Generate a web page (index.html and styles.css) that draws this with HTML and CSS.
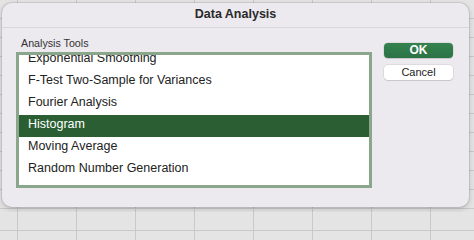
FILE: index.html
```html
<!DOCTYPE html>
<html>
<head>
<meta charset="utf-8">
<link rel="stylesheet" href="styles.css">
</head>
<body>
<div class="dialog">
  <div class="titlebar">Data Analysis</div>
  <div class="content">
    <div class="tools">
      <div class="label">Analysis Tools</div>
      <div class="listbox">
        <ul class="list">
          <li>Exponential Smoothing</li>
          <li>F-Test Two-Sample for Variances</li>
          <li>Fourier Analysis</li>
          <li class="selected">Histogram</li>
          <li>Moving Average</li>
          <li>Random Number Generation</li>
          <li>Rank and Percentile</li>
        </ul>
      </div>
    </div>
    <div class="buttons">
      <button class="btn primary">OK</button>
      <button class="btn">Cancel</button>
    </div>
  </div>
</div>
</body>
</html>
```
FILE: styles.css
```css
html {
  margin: 0;
  height: 212px;
  overflow: hidden;
}
body {
  margin: 0;
  height: 212px;
  font-family: "Liberation Sans", Arial, sans-serif;
  background-color: #e4e4e4;
  background-image:
    repeating-linear-gradient(to bottom, transparent 0, transparent 18px, #c9c9c9 18px, #c9c9c9 19px),
    repeating-linear-gradient(to right, transparent 0, transparent 17px, #c9c9c9 17px, #c9c9c9 18px, transparent 18px, transparent 59px);
  padding: 3px 5px 0 2px;
  box-sizing: border-box;
  overflow: hidden;
}
.dialog {
  width: 467px;
  height: 204px;
  background: #ece9ef;
  border-radius: 10px;
  box-shadow: 0 0 0 1px rgba(0,0,0,0.08), 0 2px 6px rgba(0,0,0,0.18);
  display: flex;
  flex-direction: column;
}
.titlebar {
  height: 24px;
  line-height: 23px;
  text-align: center;
  font-weight: bold;
  font-size: 12.5px;
  color: #2a2a2a;
  border-bottom: 1px solid #d9d6dc;
  flex: none;
}
.content {
  display: flex;
  padding: 0 0 0 14px;
}
.tools {
  width: 356px;
}
.label {
  font-size: 10.7px;
  color: #333;
  padding: 9px 0 0 5px;
  height: 15px;
  line-height: 13px;
}
.listbox {
  height: 130px;
  border: 3px solid #8aa78b;
  background: #fff;
  overflow: hidden;
}
.list {
  list-style: none;
  margin: -6px 0 0 0;
  padding: 0;
}
.list li {
  height: 22px;
  line-height: 19px;
  font-size: 12.5px;
  color: #222;
  padding-left: 9px;
  white-space: nowrap;
}
.list li.selected {
  background: #2b5f33;
  color: #fff;
}
.buttons {
  display: flex;
  flex-direction: column;
  gap: 7px;
  margin: 15px 0 0 12px;
}
.btn {
  width: 69px;
  height: 15px;
  padding: 0;
  border: none;
  border-radius: 4px;
  background: #fff;
  font-family: "Liberation Sans", Arial, sans-serif;
  font-size: 11px;
  color: #222;
  box-shadow: 0 0 0 0.5px rgba(0,0,0,0.12), 0 1px 1px rgba(0,0,0,0.1);
  line-height: 15px;
}
.btn.primary {
  background: linear-gradient(#35824f, #2c7245);
  color: #fff;
  font-weight: bold;
  font-size: 12px;
}
```
